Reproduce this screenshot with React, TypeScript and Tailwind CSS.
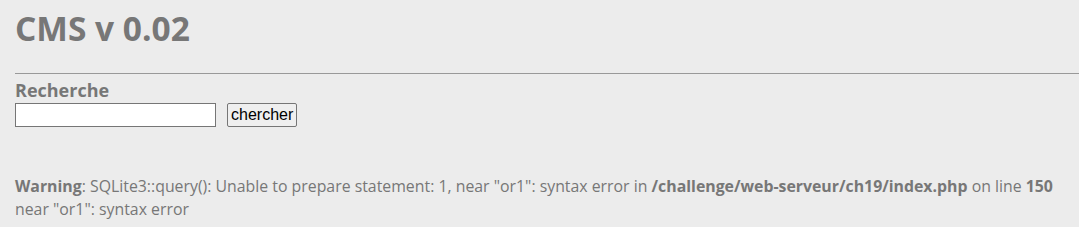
import React from "react";

export default function App() {
  return (
    <div className="min-h-[227px] w-full bg-[#ececec] px-[15px] pt-[7px] text-[#777777] font-['Open_Sans',sans-serif]">
      <h1 className="text-[33.5px] font-bold leading-[42px]">CMS v 0.02</h1>
      <hr className="mt-[24px] mr-[-15px] border-0 border-t border-[#999999]" />
      <form
        className="mt-[4px]"
        onSubmit={(e) => e.preventDefault()}
      >
        <label className="block text-[18px] font-bold leading-[24px]">Recherche</label>
        <div className="flex items-center gap-[11px] mt-[1px]">
          <input
            type="text"
            className="w-[201px] h-[24px] bg-white border border-[#767676] px-1 text-black"
          />
          <button
            type="submit"
            className="h-[24px] px-[3px] bg-[#efefef] border border-[#767676] rounded-[2px] text-black text-[16px] leading-none font-['Liberation_Sans',Arial,sans-serif]"
          >
            chercher
          </button>
        </div>
      </form>
      <p className="mt-[48px] text-[15.85px] leading-[23px]">
        <b>Warning</b>: SQLite3::query(): Unable to prepare statement: 1, near "or1": syntax error in{" "}
        <b>/challenge/web-serveur/ch19/index.php</b> on line <b>150</b>
        <br />
        near "or1": syntax error
      </p>
    </div>
  );
}
